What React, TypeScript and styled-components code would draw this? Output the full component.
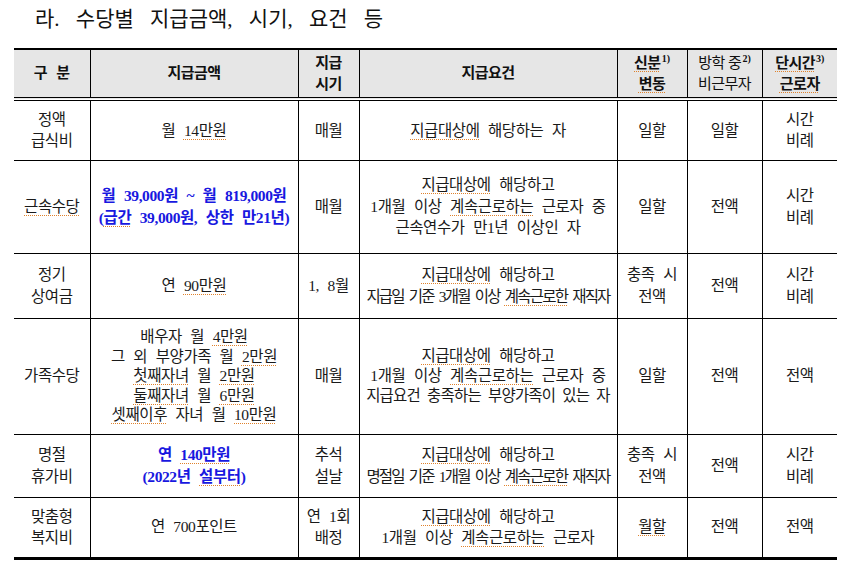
import React from "react";
import styled, { createGlobalStyle } from "styled-components";

const Global = createGlobalStyle`
  html, body { margin: 0; padding: 0; background: #ffffff; }
  body { font-family: "Liberation Serif", "Noto Sans CJK KR", serif; color: #1a1a1a; }
`;

const Page = styled.div`
  width: 849px;
  height: 573px;
  box-sizing: border-box;
  padding-left: 14px;
  background: #ffffff;
`;

const Title = styled.h2`
  margin: 0;
  height: 48px;
  box-sizing: border-box;
  padding: 6px 0 0 21px;
  font-family: "Liberation Serif", "Noto Sans CJK KR", serif;
  font-size: 21px;
  line-height: 26px;
  font-weight: 400;
  word-spacing: 11px;
  color: #111111;
`;

const Table = styled.table`
  width: 823px;
  border-collapse: collapse;
  table-layout: fixed;
  border-top: 2px solid #000000;
  border-bottom: 3px solid #000000;
`;

const HeadRow = styled.tr`
  height: 50px;
  background: #e6e6e6;
  border-bottom: 4px double #000000;
`;

const Row = styled.tr<{ $h: number }>`
  height: ${(p) => p.$h}px;
  border-top: 1px solid #000000;
`;

const Th = styled.th<{ $light?: boolean }>`
  padding: 0;
  text-align: center;
  vertical-align: middle;
  border-left: 1px solid #000000;
  border-right: 1px solid #000000;
  &:first-child { border-left: 0; }
  &:last-child { border-right: 0; }
  font-family: "Liberation Serif", "Noto Sans CJK KR", sans-serif;
  font-size: 15px;
  line-height: 21px;
  letter-spacing: -0.5px;
  font-weight: ${(p) => (p.$light ? 400 : 700)};
  color: #111111;
`;

const Td = styled.td<{ $lh?: number; $blue?: boolean }>`
  padding: 0;
  text-align: center;
  vertical-align: middle;
  border-left: 1px solid #000000;
  border-right: 1px solid #000000;
  &:first-child { border-left: 0; }
  &:last-child { border-right: 0; }
  font-size: 15.5px;
  line-height: ${(p) => p.$lh ?? 21.5}px;
  letter-spacing: -0.4px;
  word-spacing: 5px;
  font-weight: ${(p) => (p.$blue ? 700 : 400)};
  color: ${(p) => (p.$blue ? "#1818e0" : "#1a1a1a")};
`;

const Line = styled.div<{ $ls?: number; $ws?: number }>`
  display: block;
  white-space: nowrap;
  ${(p) => (p.$ls !== undefined ? `letter-spacing: ${p.$ls}px;` : "")}
  ${(p) => (p.$ws !== undefined ? `word-spacing: ${p.$ws}px;` : "")}
`;

const Sq = styled.span`
  text-decoration-line: underline;
  text-decoration-style: dotted;
  text-decoration-color: #e0822c;
  text-decoration-thickness: 1px;
  text-underline-offset: 3px;
  text-decoration-skip-ink: none;
`;

const Sup = styled.sup`
  font-family: "Liberation Serif", serif;
  font-size: 10px;
  font-weight: 700;
  line-height: 0;
  vertical-align: 6px;
  letter-spacing: 0;
  margin-left: 1px;
`;

const Spaced = styled.span`
  word-spacing: 6px;
`;

const widths = [76, 208, 61, 258, 70, 75, 75];

export default function App() {
  return (
    <Page>
      <Global />
      <Title>라. 수당별 지급금액, 시기, 요건 등</Title>
      <Table>
        <colgroup>
          {widths.map((w, i) => (
            <col key={i} style={{ width: w }} />
          ))}
        </colgroup>
        <thead>
          <HeadRow>
            <Th><Spaced>구 분</Spaced></Th>
            <Th>지급금액</Th>
            <Th>
              <Line>지급</Line>
              <Line>시기</Line>
            </Th>
            <Th>지급요건</Th>
            <Th>
              <Line><Sq>신분</Sq><Sup>1)</Sup></Line>
              <Line><Sq>변동</Sq></Line>
            </Th>
            <Th $light>
              <Line>방학 중<Sup>2)</Sup></Line>
              <Line>비근무자</Line>
            </Th>
            <Th>
              <Line><Sq>단시간</Sq><Sup>3)</Sup></Line>
              <Line><Sq>근로자</Sq></Line>
            </Th>
          </HeadRow>
        </thead>
        <tbody>
          <Row $h={61}>
            <Td>
              <Line>정액</Line>
              <Line>급식비</Line>
            </Td>
            <Td>월 <Sq>14만원</Sq></Td>
            <Td>매월</Td>
            <Td><Sq>지급대상에</Sq> 해당하는 자</Td>
            <Td>일할</Td>
            <Td>일할</Td>
            <Td>
              <Line>시간</Line>
              <Line>비례</Line>
            </Td>
          </Row>
          <Row $h={93}>
            <Td><Sq>근속수당</Sq></Td>
            <Td $blue>
              <Line>월 39,000원 ~ 월 819,000원</Line>
              <Line>(<Sq>급간</Sq> 39,000원, 상한 만21년)</Line>
            </Td>
            <Td>매월</Td>
            <Td>
              <Line><Sq>지급대상에</Sq> 해당하고</Line>
              <Line>1개월 이상 <Sq>계속근로하는</Sq> 근로자 중</Line>
              <Line>근속연수가 만1년 이상인 자</Line>
            </Td>
            <Td>일할</Td>
            <Td>전액</Td>
            <Td>
              <Line>시간</Line>
              <Line>비례</Line>
            </Td>
          </Row>
          <Row $h={65}>
            <Td>
              <Line>정기</Line>
              <Line>상여금</Line>
            </Td>
            <Td>연 <Sq>90만원</Sq></Td>
            <Td>1, 8월</Td>
            <Td>
              <Line><Sq>지급대상에</Sq> 해당하고</Line>
              <Line $ls={-1.8} $ws={3}>지급일 기준 3개월 이상 <Sq>계속근로한</Sq> 재직자</Line>
            </Td>
            <Td>
              <Line>충족 시</Line>
              <Line>전액</Line>
            </Td>
            <Td>전액</Td>
            <Td>
              <Line>시간</Line>
              <Line>비례</Line>
            </Td>
          </Row>
          <Row $h={116}>
            <Td>가족수당</Td>
            <Td $lh={19.6}>
              <Line>배우자 월 <Sq>4만원</Sq></Line>
              <Line>그 외 부양가족 월 <Sq>2만원</Sq></Line>
              <Line><Sq>첫째자녀</Sq> 월 <Sq>2만원</Sq></Line>
              <Line><Sq>둘째자녀</Sq> 월 <Sq>6만원</Sq></Line>
              <Line><Sq>셋째이후</Sq> 자녀 월 <Sq>10만원</Sq></Line>
            </Td>
            <Td>매월</Td>
            <Td $lh={20}>
              <Line><Sq>지급대상에</Sq> 해당하고</Line>
              <Line>1개월 이상 <Sq>계속근로하는</Sq> 근로자 중</Line>
              <Line $ls={-0.8} $ws={4}>지급요건 충족하는 부양가족이 있는 자</Line>
            </Td>
            <Td>일할</Td>
            <Td>전액</Td>
            <Td>전액</Td>
          </Row>
          <Row $h={63}>
            <Td>
              <Line>명절</Line>
              <Line>휴가비</Line>
            </Td>
            <Td $blue>
              <Line>연 <Sq>140만원</Sq></Line>
              <Line>(2022년 <Sq>설부터</Sq>)</Line>
            </Td>
            <Td>
              <Line>추석</Line>
              <Line>설날</Line>
            </Td>
            <Td>
              <Line><Sq>지급대상에</Sq> 해당하고</Line>
              <Line $ls={-1.8} $ws={3}>명절일 기준 1개월 이상 <Sq>계속근로한</Sq> 재직자</Line>
            </Td>
            <Td>
              <Line>충족 시</Line>
              <Line>전액</Line>
            </Td>
            <Td>전액</Td>
            <Td>
              <Line>시간</Line>
              <Line>비례</Line>
            </Td>
          </Row>
          <Row $h={61}>
            <Td>
              <Line>맞춤형</Line>
              <Line>복지비</Line>
            </Td>
            <Td>연 700포인트</Td>
            <Td>
              <Line>연 1회</Line>
              <Line>배정</Line>
            </Td>
            <Td>
              <Line><Sq>지급대상에</Sq> 해당하고</Line>
              <Line>1개월 이상 <Sq>계속근로하는</Sq> 근로자</Line>
            </Td>
            <Td><Sq>월할</Sq></Td>
            <Td>전액</Td>
            <Td>전액</Td>
          </Row>
        </tbody>
      </Table>
    </Page>
  );
}
